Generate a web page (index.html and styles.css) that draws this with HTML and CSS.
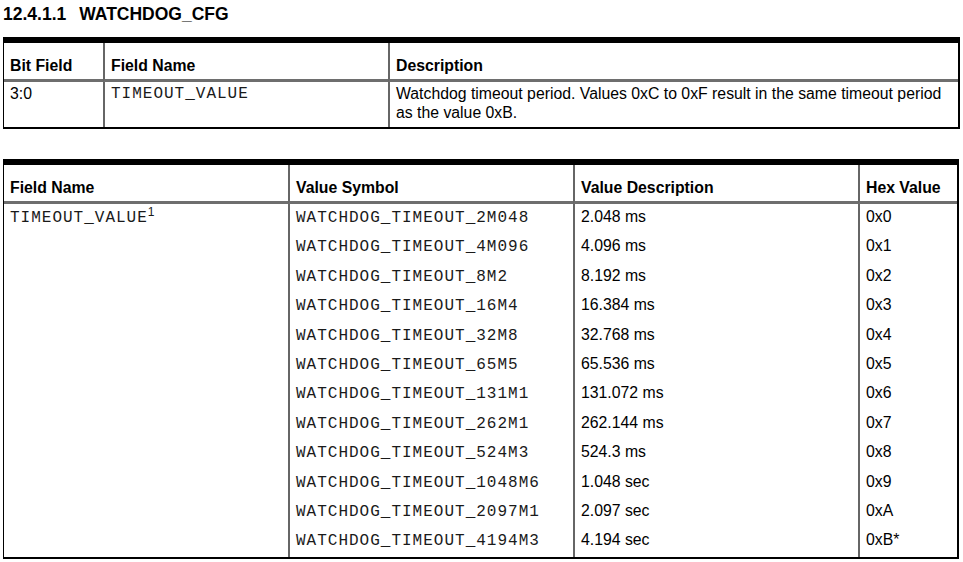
FILE: index.html
```html
<!DOCTYPE html>
<html lang="en">
<head>
    <meta charset="UTF-8">
    <meta name="viewport" content="width=device-width, initial-scale=1.0">
    <title>WATCHDOG_CFG</title>
    <link rel="stylesheet" href="styles.css">
</head>
<body>
    <h1 class="section-title"><span class="section-num">12.4.1.1</span>WATCHDOG_CFG</h1>

    <table class="reg-table bits-table">
        <colgroup>
            <col class="col-bit">
            <col class="col-name">
            <col class="col-desc">
        </colgroup>
        <thead>
            <tr>
                <th>Bit Field</th>
                <th class="sep">Field Name</th>
                <th class="sep">Description</th>
            </tr>
        </thead>
        <tbody>
            <tr>
                <td>3:0</td>
                <td class="sep mono">TIMEOUT_VALUE</td>
                <td class="sep">Watchdog timeout period. Values 0xC to 0xF result in the same timeout period as the value 0xB.</td>
            </tr>
        </tbody>
    </table>

    <table class="reg-table values-table">
        <colgroup>
            <col class="col-field">
            <col class="col-symbol">
            <col class="col-value">
            <col class="col-hex">
        </colgroup>
        <thead>
            <tr>
                <th>Field Name</th>
                <th class="sep">Value Symbol</th>
                <th class="sep">Value Description</th>
                <th class="sep">Hex Value</th>
            </tr>
        </thead>
        <tbody>
            <tr>
                <td class="mono" rowspan="12">TIMEOUT_VALUE<sup class="note">1</sup></td>
                <td class="sep mono">WATCHDOG_TIMEOUT_2M048</td>
                <td class="sep">2.048 ms</td>
                <td class="sep">0x0</td>
            </tr>
            <tr>
                <td class="sep mono">WATCHDOG_TIMEOUT_4M096</td>
                <td class="sep">4.096 ms</td>
                <td class="sep">0x1</td>
            </tr>
            <tr>
                <td class="sep mono">WATCHDOG_TIMEOUT_8M2</td>
                <td class="sep">8.192 ms</td>
                <td class="sep">0x2</td>
            </tr>
            <tr>
                <td class="sep mono">WATCHDOG_TIMEOUT_16M4</td>
                <td class="sep">16.384 ms</td>
                <td class="sep">0x3</td>
            </tr>
            <tr>
                <td class="sep mono">WATCHDOG_TIMEOUT_32M8</td>
                <td class="sep">32.768 ms</td>
                <td class="sep">0x4</td>
            </tr>
            <tr>
                <td class="sep mono">WATCHDOG_TIMEOUT_65M5</td>
                <td class="sep">65.536 ms</td>
                <td class="sep">0x5</td>
            </tr>
            <tr>
                <td class="sep mono">WATCHDOG_TIMEOUT_131M1</td>
                <td class="sep">131.072 ms</td>
                <td class="sep">0x6</td>
            </tr>
            <tr>
                <td class="sep mono">WATCHDOG_TIMEOUT_262M1</td>
                <td class="sep">262.144 ms</td>
                <td class="sep">0x7</td>
            </tr>
            <tr>
                <td class="sep mono">WATCHDOG_TIMEOUT_524M3</td>
                <td class="sep">524.3 ms</td>
                <td class="sep">0x8</td>
            </tr>
            <tr>
                <td class="sep mono">WATCHDOG_TIMEOUT_1048M6</td>
                <td class="sep">1.048 sec</td>
                <td class="sep">0x9</td>
            </tr>
            <tr>
                <td class="sep mono">WATCHDOG_TIMEOUT_2097M1</td>
                <td class="sep">2.097 sec</td>
                <td class="sep">0xA</td>
            </tr>
            <tr>
                <td class="sep mono">WATCHDOG_TIMEOUT_4194M3</td>
                <td class="sep">4.194 sec</td>
                <td class="sep">0xB*</td>
            </tr>
        </tbody>
    </table>
</body>
</html>
```

FILE: styles.css
```css
body {
    margin: 0;
    padding: 0 3px;
    background: #fff;
    color: #000;
    font-family: "Liberation Sans", Arial, sans-serif;
    font-size: 15.8px;
}
.section-title {
    margin: 4px 0 13px 0;
    font-size: 17.5px;
    line-height: 20px;
    font-weight: bold;
}
.section-num {
    margin-right: 13px;
}
.reg-table {
    border-collapse: separate;
    border-spacing: 0;
    table-layout: fixed;
    border-top: 6px solid #000;
    border-left: 1px solid #000;
    border-right: 2px solid #000;
    border-bottom: 2px solid #000;
}
.bits-table {
    width: 956px;
    margin-bottom: 30px;
}
.values-table {
    width: 955px;
}
.col-bit { width: 99px; }
.col-name { width: 285px; }
.col-desc { width: 570px; }
.col-field { width: 284px; }
.col-symbol { width: 285px; }
.col-value { width: 285px; }
.col-hex { width: 99px; }
th, td {
    text-align: left;
    vertical-align: top;
    line-height: 19px;
    padding-left: 6px;
    padding-right: 6px;
}
th {
    font-weight: bold;
    padding-top: 13px;
    padding-bottom: 4px;
    border-bottom: 3px solid #6e6e6e;
}
.sep {
    border-left: 2px solid #666;
}
.bits-table td {
    padding-top: 2px;
    padding-bottom: 5px;
}
.bits-table td.mono {
    padding-top: 3px;
    padding-bottom: 4px;
}
.values-table td {
    padding-top: 3px;
    padding-bottom: 7.4px;
}
.values-table td.mono {
    padding-top: 5px;
    padding-bottom: 5.4px;
}
.mono {
    font-family: "Liberation Mono", "Courier New", monospace;
    font-size: 16px;
    letter-spacing: 1px;
    color: #1a1a1a;
}
.note {
    font-family: "Liberation Sans", Arial, sans-serif;
    font-size: 12px;
    letter-spacing: 0;
    line-height: 0;
    vertical-align: 6px;
}
```
